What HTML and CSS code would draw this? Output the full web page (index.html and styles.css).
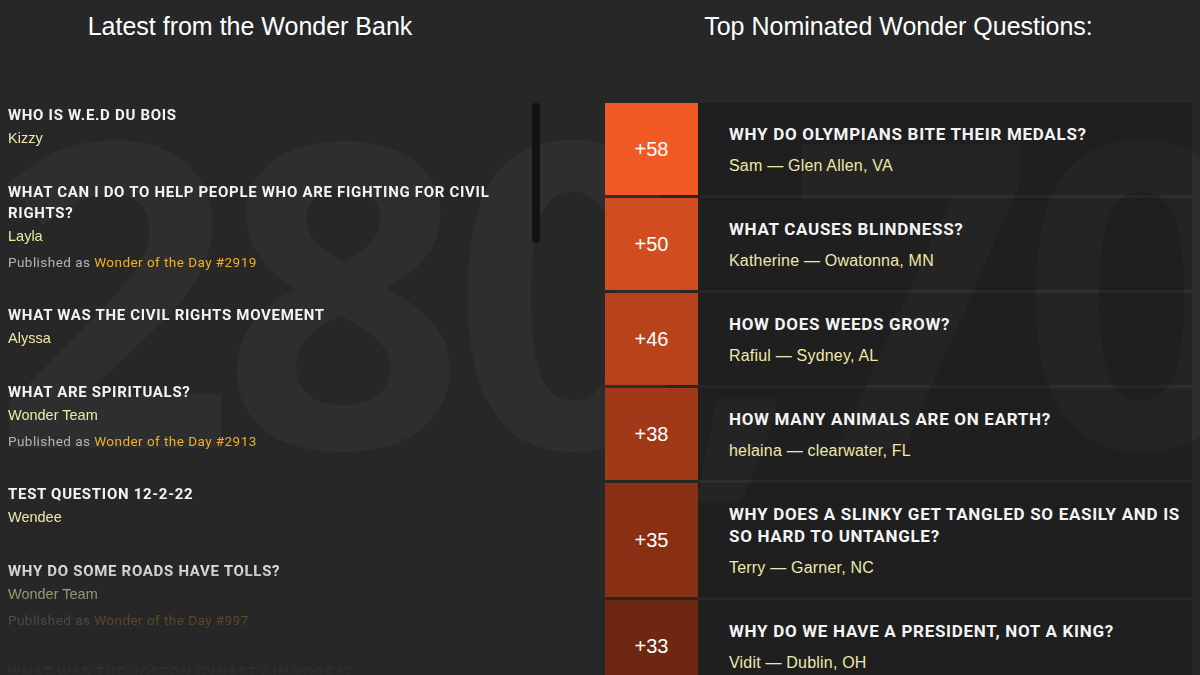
FILE: index.html
```html
<!DOCTYPE html>
<html lang="en">
<head>
    <meta charset="UTF-8">
    <meta name="viewport" content="width=device-width, initial-scale=1.0">
    <title>Wonder Bank</title>
    <link rel="stylesheet" href="styles.css">
</head>
<body>
    <div class="bg-count">280,703</div>
    <div class="page">
        <section class="col col-left">
            <h2 class="col-title">Latest from the Wonder Bank</h2>
            <div class="bank">
                <div class="bank-list">
                    <div class="wonder">
                        <div class="wonder-q">Who is W.E.D du Bois</div>
                        <div class="wonder-by">Kizzy</div>
                    </div>
                    <div class="wonder">
                        <div class="wonder-q">What can I do to help people who are fighting for civil rights?</div>
                        <div class="wonder-by">Layla</div>
                        <div class="wonder-pub">Published as <a href="#">Wonder of the Day #2919</a></div>
                    </div>
                    <div class="wonder">
                        <div class="wonder-q">What was the civil rights movement</div>
                        <div class="wonder-by">Alyssa</div>
                    </div>
                    <div class="wonder">
                        <div class="wonder-q">What are spirituals?</div>
                        <div class="wonder-by">Wonder Team</div>
                        <div class="wonder-pub">Published as <a href="#">Wonder of the Day #2913</a></div>
                    </div>
                    <div class="wonder">
                        <div class="wonder-q">Test question 12-2-22</div>
                        <div class="wonder-by">Wendee</div>
                    </div>
                    <div class="wonder">
                        <div class="wonder-q">Why do some roads have tolls?</div>
                        <div class="wonder-by">Wonder Team</div>
                        <div class="wonder-pub">Published as <a href="#">Wonder of the Day #997</a></div>
                    </div>
                    <div class="wonder">
                        <div class="wonder-q">What was the Joseon Dynasty in Korea?</div>
                        <div class="wonder-by">Wonder Team</div>
                    </div>
                </div>
                <div class="scroll-track"><div class="scroll-thumb"></div></div>
            </div>
        </section>

        <section class="col col-right">
            <h2 class="col-title">Top Nominated Wonder Questions:</h2>
            <div class="nominee">
                <div class="votes v1">+58</div>
                <div class="nominee-body">
                    <div class="nominee-q">Why do Olympians bite their medals?</div>
                    <div class="nominee-by">Sam — Glen Allen, VA</div>
                </div>
            </div>
            <div class="nominee">
                <div class="votes v2">+50</div>
                <div class="nominee-body">
                    <div class="nominee-q">What causes blindness?</div>
                    <div class="nominee-by">Katherine — Owatonna, MN</div>
                </div>
            </div>
            <div class="nominee">
                <div class="votes v3">+46</div>
                <div class="nominee-body">
                    <div class="nominee-q">How does weeds grow?</div>
                    <div class="nominee-by">Rafiul — Sydney, AL</div>
                </div>
            </div>
            <div class="nominee">
                <div class="votes v4">+38</div>
                <div class="nominee-body">
                    <div class="nominee-q">How many animals are on earth?</div>
                    <div class="nominee-by">helaina — clearwater, FL</div>
                </div>
            </div>
            <div class="nominee">
                <div class="votes v5">+35</div>
                <div class="nominee-body">
                    <div class="nominee-q">Why does a slinky get tangled so easily and is so hard to untangle?</div>
                    <div class="nominee-by">Terry — Garner, NC</div>
                </div>
            </div>
            <div class="nominee">
                <div class="votes v6">+33</div>
                <div class="nominee-body">
                    <div class="nominee-q">Why do we have a president, not a king?</div>
                    <div class="nominee-by">Vidit — Dublin, OH</div>
                </div>
            </div>
        </section>
    </div>
</body>
</html>
```

FILE: styles.css
```css
body, html {
    margin: 0;
    padding: 0;
    height: 675px;
    overflow: hidden;
}
body {
    position: relative;
    background-color: #272727;
    color: #fff;
    font-family: "Liberation Sans", Arial, sans-serif;
}
.bg-count {
    position: absolute;
    left: -8px;
    top: 71px;
    z-index: 0;
    font-family: "Open Sans", sans-serif;
    font-weight: 700;
    font-size: 425px;
    line-height: 1;
    letter-spacing: -13px;
    color: #2e2e2e;
    white-space: nowrap;
}
.page {
    position: relative;
    z-index: 1;
    display: flex;
    padding: 0 8px;
}
.col-left {
    width: 534px;
    flex-shrink: 0;
}
.col-right {
    flex: 1;
    margin-left: 63px;
}
.col-title {
    margin: 0 0 63px;
    padding-top: 12px;
    font-size: 25px;
    font-weight: normal;
    line-height: 28px;
    text-align: center;
}
.col-left .col-title {
    padding-right: 50px;
}
.bank {
    display: flex;
    height: 572px;
}
.bank-list {
    width: 515px;
    padding-top: 2px;
    overflow: hidden;
    -webkit-mask-image: linear-gradient(to bottom, #000 455px, rgba(0, 0, 0, 0.25) 516px, transparent 575px);
    mask-image: linear-gradient(to bottom, #000 455px, rgba(0, 0, 0, 0.25) 516px, transparent 575px);
}
.wonder {
    margin-bottom: 33.5px;
}
.wonder-q {
    font-family: Roboto, sans-serif;
    font-weight: 700;
    font-size: 15px;
    line-height: 21px;
    letter-spacing: 0.7px;
    text-transform: uppercase;
    color: #f4f4f4;
}
.wonder-by {
    margin-top: 2px;
    font-size: 14.5px;
    line-height: 20px;
    color: #eee8aa;
}
.wonder-pub {
    margin-top: 6px;
    font-family: Roboto, sans-serif;
    font-size: 13.5px;
    line-height: 20px;
    letter-spacing: 0.45px;
    color: #b3b3b3;
}
.wonder-pub a {
    color: #efb022;
    text-decoration: none;
}
.scroll-track {
    width: 8px;
    margin-left: 9px;
}
.scroll-thumb {
    height: 140px;
    border-radius: 4px;
    background-color: #131313;
}
.nominee {
    display: flex;
    margin-bottom: 3px;
    background-color: rgba(0, 0, 0, 0.2);
}
.votes {
    width: 93px;
    flex-shrink: 0;
    display: flex;
    align-items: center;
    justify-content: center;
    font-size: 20px;
    color: #fff;
}
.v1 { background-color: #f15a24; }
.v2 { background-color: #d14d1f; }
.v3 { background-color: #b8431b; }
.v4 { background-color: #a13918; }
.v5 { background-color: #893014; }
.v6 { background-color: #6e2711; }
.nominee-body {
    padding: 20px 8px 19px 31px;
}
.nominee-q {
    font-family: Roboto, sans-serif;
    font-weight: 700;
    font-size: 17px;
    line-height: 22px;
    letter-spacing: 0.7px;
    text-transform: uppercase;
    color: #f4f4f4;
}
.nominee-by {
    margin-top: 11px;
    font-size: 16px;
    line-height: 20px;
    letter-spacing: 0.2px;
    color: #eee8aa;
}
```
